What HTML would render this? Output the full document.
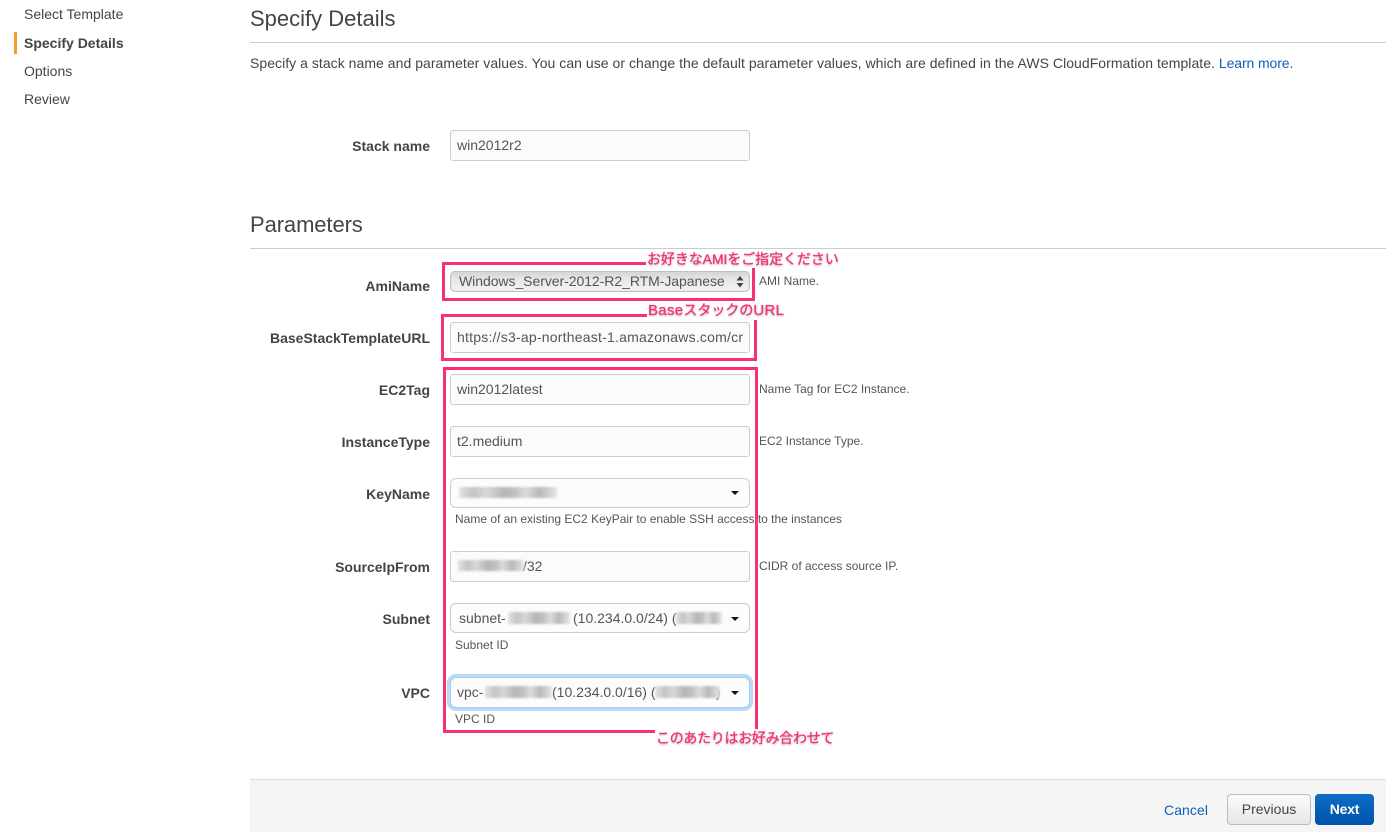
<!DOCTYPE html>
<html lang="en">
<head>
<meta charset="utf-8">
<title>Specify Details</title>
<style>
html,body{margin:0;padding:0;background:#fff}
body{position:relative;width:1386px;height:832px;overflow:hidden;font-family:"Liberation Sans",Arial,sans-serif;color:#444;font-size:14px}
.t{position:absolute;white-space:nowrap;line-height:18px}
.nav{left:24px;font-size:14px;color:#444}
.h{left:250px;font-size:22px;line-height:28px;color:#444}
.hr{position:absolute;left:250px;width:1136px;height:1px;background:#ccc}
.l{right:956px;font-weight:bold;font-size:14px;color:#444;text-align:right}
.f{position:absolute;left:450px;width:298px;height:29px;border:1px solid #ccc;border-radius:3px;background:#fbfbfb;line-height:28px;font-size:14px;color:#555;box-sizing:content-box;overflow:hidden;white-space:nowrap;padding:0}
.f span.v{position:absolute;left:6px;top:0}
.s{border-radius:6px;height:28px;background:#fcfcfc}
.car{position:absolute;left:731px;width:0;height:0;border-left:4px solid transparent;border-right:4px solid transparent;border-top:4px solid #111}
.d{font-size:12px;color:#555}
.fr{position:absolute;border:3px solid #f8326f;box-sizing:border-box}
.an{position:absolute;white-space:nowrap;font-family:"Liberation Sans","Noto Sans CJK JP",sans-serif;font-size:14px;line-height:18px;color:#f8326f;background:#fff;padding:0 1px;-webkit-text-stroke:.3px #f8326f;text-shadow:0 1px 2px rgba(0,0,0,.35)}
.b{position:absolute;filter:blur(1px);background:linear-gradient(90deg,#e2e2e2,#c4c4c4 15%,#d8d8d8 28%,#b6b6b6 45%,#c2c2c2 58%,#dcdcdc 68%,#b8b8b8 82%,#e6e6e6)}
</style>
</head>
<body>
<div style="position:absolute;left:14px;top:32px;width:3px;height:22px;background:#f79a2e"></div>
<div class="t nav" style="top:5px">Select Template</div>
<div class="t nav" style="top:34px;font-weight:bold">Specify Details</div>
<div class="t nav" style="top:62px">Options</div>
<div class="t nav" style="top:90px">Review</div>

<div class="t h" style="top:5px">Specify Details</div>
<div class="hr" style="top:42px"></div>
<div class="t" style="left:250px;top:54px;color:#444;letter-spacing:.04px">Specify a stack name and parameter values. You can use or change the default parameter values, which are defined in the AWS CloudFormation template. <span style="color:#0f5fb8;letter-spacing:-.1px">Learn more.</span></div>

<div class="t l" style="top:137px">Stack name</div>
<div class="f" style="top:130px"><span class="v">win2012r2</span></div>

<div class="t h" style="top:211px;letter-spacing:-.1px">Parameters</div>
<div class="hr" style="top:248px"></div>

<div class="t l" style="top:277px">AmiName</div>
<div style="position:absolute;left:450px;top:271px;width:300px;height:21px;border-radius:5px;background:linear-gradient(#d0d0d0,#e6e6e6 35%,#f4f4f4);box-shadow:inset 0 0 0 1px #c0c0c0,inset 0 0 2px 1px #ddd"></div>
<div class="t" style="left:459px;top:272px;color:#555;letter-spacing:-.05px">Windows_Server-2012-R2_RTM-Japanese</div>
<svg style="position:absolute;left:736px;top:276px" width="8" height="12"><path d="M4 0L7.5 4.5H.5zM4 11.5L.5 7H7.5z" fill="#444"/></svg>
<div class="t d" style="left:759px;top:272px">AMI Name.</div>

<div class="t l" style="top:329px">BaseStackTemplateURL</div>
<div class="f" style="top:322px"><span class="v" style="width:287px;overflow:hidden;letter-spacing:.22px">https://s3-ap-northeast-1.amazonaws.com/cr</span></div>

<div class="t l" style="top:381px">EC2Tag</div>
<div class="f" style="top:374px"><span class="v">win2012latest</span></div>
<div class="t d" style="left:759px;top:380px">Name Tag for EC2 Instance.</div>

<div class="t l" style="top:433px">InstanceType</div>
<div class="f" style="top:426px"><span class="v">t2.medium</span></div>
<div class="t d" style="left:759px;top:432px">EC2 Instance Type.</div>

<div class="t l" style="top:485px">KeyName</div>
<div class="f s" style="top:478px"></div>
<div class="b" style="left:459px;top:487px;width:98px;height:11px"></div>
<div class="car" style="top:491px"></div>
<div class="t d" style="left:455px;top:510px">Name of an existing EC2 KeyPair to enable SSH access to the instances</div>

<div class="t l" style="top:558px">SourceIpFrom</div>
<div class="f" style="top:551px"><span class="v" style="left:72px">/32</span></div>
<div class="b" style="left:458px;top:560px;width:66px;height:11px"></div>
<div class="t d" style="left:759px;top:557px">CIDR of access source IP.</div>

<div class="t l" style="top:610px">Subnet</div>
<div class="f s" style="top:603px"><span class="v" style="left:8px">subnet-</span><span class="v" style="left:122px">(10.234.0.0/24) (</span></div>
<div class="b" style="left:508px;top:612px;width:62px;height:12px"></div>
<div class="b" style="left:676px;top:612px;width:46px;height:12px"></div>
<div class="car" style="top:617px"></div>
<div class="t d" style="left:455px;top:636px">Subnet ID</div>

<div class="t l" style="top:684px">VPC</div>
<div class="f s" style="top:677px;height:29px;border-color:#a9cdf0;box-shadow:0 0 0 3px #b9d9f6"><span class="v">vpc-</span><span class="v" style="left:101px">(10.234.0.0/16) (</span><span class="v" style="left:265px">)</span></div>
<div class="b" style="left:485px;top:686px;width:67px;height:12px"></div>
<div class="b" style="left:655px;top:686px;width:65px;height:12px"></div>
<div class="car" style="top:691px"></div>
<div class="t d" style="left:455px;top:710px">VPC ID</div>

<div class="fr" style="left:442px;top:262px;width:313px;height:39px"></div>
<div class="fr" style="left:441px;top:314px;width:316px;height:47px"></div>
<div class="fr" style="left:443px;top:367px;width:315px;height:366px"></div>

<div class="an" style="left:646px;top:250px;letter-spacing:-.08px">お好きなAMIをご指定ください</div>
<div class="an" style="left:647px;top:301px"><span style="font-size:15px;letter-spacing:.3px">Base</span>スタックの<span style="font-size:15px;letter-spacing:.3px">URL</span></div>
<div class="an" style="left:655px;top:729px;letter-spacing:-.3px">このあたりはお好み合わせて</div>

<div style="position:absolute;left:250px;top:779px;width:1136px;height:53px;background:#f5f5f5;border-top:1px solid #ddd;box-sizing:border-box"></div>
<div class="t" style="left:1164px;top:801px;color:#0f5fb8;letter-spacing:.08px">Cancel</div>
<div style="position:absolute;left:1227px;top:794px;width:84px;height:31px;box-sizing:border-box;border:1px solid #bbb;border-radius:4px;background:linear-gradient(#fbfbfb,#e6e6e6);text-align:center;line-height:29px;color:#444">Previous</div>
<div style="position:absolute;left:1315px;top:794px;width:59px;height:31px;box-sizing:border-box;border-radius:4px;background:linear-gradient(#0e6cc6,#0053a8);text-align:center;line-height:31px;color:#fff;font-weight:bold;letter-spacing:-.2px">Next</div>
</body>
</html>
